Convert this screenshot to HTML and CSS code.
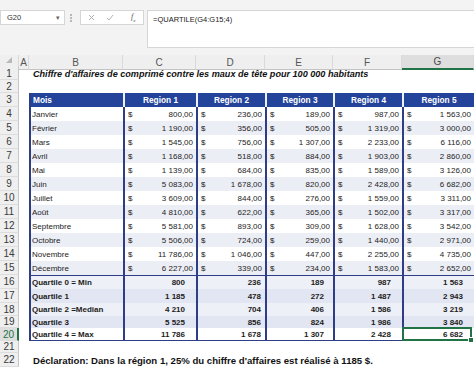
FILE: index.html
```html
<!DOCTYPE html>
<html lang="fr">
<head>
    <meta charset="UTF-8">
    <meta name="viewport" content="width=device-width, initial-scale=1.0">
    <title>Quartiles - Chiffre d'affaires</title>
    <link rel="stylesheet" href="styles.css">
</head>
<body>
<div class="formula-bar">
    <div class="name-box"><span>G20</span><span class="caret">▾</span></div>
    <div class="grip"></div>
    <div class="fx-box">
        <svg class="fx-icon" width="7" height="7" viewBox="0 0 7 7"><path d="M1 1L6 6M6 1L1 6" stroke="#a8a8a8" stroke-width="0.9" fill="none"/></svg>
        <svg class="fx-icon" width="8" height="7" viewBox="0 0 8 7"><path d="M1 4L3 6L7 1" stroke="#a8a8a8" stroke-width="0.9" fill="none"/></svg>
        <span class="fx-label">f<sub>x</sub></span>
    </div>
    <div class="formula">=QUARTILE(G4:G15;4)</div>
</div>

<div class="sheet" id="sheet">
    <div class="row col-head h12">
        <div class="corner"><svg width="19" height="12" viewBox="0 0 19 12"><polygon points="12,2 12,8 6,8" fill="#b9b9b9"/></svg></div>
        <div>A</div>
        <div>B</div>
        <div>C</div>
        <div>D</div>
        <div>E</div>
        <div>F</div>
        <div class="sel">G</div>
    </div>
</div>

<script>
    const cols = ['c', 'd', 'e', 'f', 'g'];

    const mois = [
        ['Janvier', '800,00', '236,00', '189,00', '987,00', '1 563,00'],
        ['Février', '1 190,00', '356,00', '505,00', '1 319,00', '3 000,00'],
        ['Mars', '1 545,00', '756,00', '1 307,00', '2 233,00', '6 116,00'],
        ['Avril', '1 168,00', '518,00', '884,00', '1 903,00', '2 860,00'],
        ['Mai', '1 139,00', '684,00', '835,00', '1 589,00', '3 126,00'],
        ['Juin', '5 083,00', '1 678,00', '820,00', '2 428,00', '6 682,00'],
        ['Juillet', '3 609,00', '844,00', '276,00', '1 559,00', '3 311,00'],
        ['Août', '4 810,00', '622,00', '365,00', '1 502,00', '3 317,00'],
        ['Septembre', '5 581,00', '893,00', '309,00', '1 628,00', '3 542,00'],
        ['Octobre', '5 506,00', '724,00', '259,00', '1 440,00', '2 971,00'],
        ['Novembre', '11 786,00', '1 046,00', '447,00', '2 255,00', '4 735,00'],
        ['Décembre', '6 227,00', '339,00', '234,00', '1 583,00', '2 652,00']
    ];

    const quartiles = [
        ['Quartile 0 = Min', '800', '236', '189', '987', '1 563'],
        ['Quartile 1', '1 185', '478', '272', '1 487', '2 943'],
        ['Quartile 2 =Median', '4 210', '704', '406', '1 586', '3 219'],
        ['Quartile 3', '5 525', '856', '824', '1 986', '3 840'],
        ['Quartile 4 = Max', '11 786', '1 678', '1 307', '2 428', '6 682']
    ];

    const sheet = document.getElementById('sheet');

    function addRow(num, cls, cells, rhCls = '') {
        const row = document.createElement('div');
        row.className = 'row ' + cls;
        row.innerHTML = `<div class="rh ${rhCls}">${num}</div><div class="cell"></div>` + cells;
        sheet.appendChild(row);
    }

    addRow(1, 'h13', '<div class="cell title">Chiffre d\'affaires de comprimé contre les maux de tête pour 100 000 habitants</div>');
    addRow(2, 'h13', '');
    addRow(3, 'head h14',
        '<div class="cell t b">Mois</div>' +
        [1, 2, 3, 4, 5].map(n => `<div class="cell t">Region ${n}</div>`).join(''));

    mois.forEach((m, i) => {
        let cells = `<div class="cell t b label">${m[0]}</div>`;
        for (let k = 1; k <= 5; k++) {
            cells += `<div class="cell t money ${cols[k - 1]}"><span>$</span><span>${m[k]}</span></div>`;
        }
        addRow(4 + i, 'data h14' + (i % 2 ? ' alt' : ''), cells);
    });

    const qHeights = ['h14', 'h14', 'h13', 'h12', 'h13'];
    quartiles.forEach((q, i) => {
        let cells = `<div class="cell t b label">${q[0]}</div>`;
        for (let k = 1; k <= 5; k++) {
            const sel = (i === 4 && k === 5) ? ' sel' : '';
            cells += `<div class="cell t num ${cols[k - 1]}${sel}">${q[k]}</div>`;
        }
        addRow(16 + i, `quart q${i} ${qHeights[i]}`, cells, i === 4 ? 'sel' : '');
    });

    addRow(21, 'h12', '');
    addRow(22, 'h14', '<div class="cell decl">Déclaration: Dans la région 1, 25% du chiffre d\'affaires est réalisé à 1185 $.</div>');
</script>
</body>
</html>
```

FILE: styles.css
```css
body {
    margin: 0;
    width: 474px;
    height: 367px;
    overflow: hidden;
    background-color: #ffffff;
    font-family: "Liberation Sans", Arial, sans-serif;
    color: #1c1c1c;
}

/* barre de formule */

.formula-bar {
    display: flex;
    align-items: flex-start;
    height: 55px;
    box-sizing: border-box;
    padding-top: 10px;
    background-color: #f3f3f3;
}

.name-box {
    display: flex;
    align-items: center;
    justify-content: space-between;
    width: 65px;
    height: 15px;
    box-sizing: border-box;
    padding: 0 4px 0 6px;
    background-color: #ffffff;
    border: 1px solid #d6d6d6;
    font-size: 7.5px;
    color: #333333;
}

.caret {
    font-size: 7px;
    color: #666666;
}

.grip {
    width: 0;
    height: 8px;
    margin: 4px 8px 0 5px;
    border-left: 2px dotted #b8b8b8;
}

.fx-box {
    display: flex;
    align-items: center;
    gap: 11px;
    width: 64px;
    height: 15px;
    box-sizing: border-box;
    padding-left: 7px;
    background-color: #ffffff;
    border: 1px solid #d6d6d6;
}

.fx-label {
    margin-left: 6px;
    font-family: "Liberation Serif", serif;
    font-style: italic;
    font-size: 8px;
    color: #555555;
}

.fx-label sub {
    font-size: 5px;
}

.formula {
    flex: 1;
    height: 38px;
    box-sizing: border-box;
    margin-left: 3px;
    padding: 4px 5px;
    background-color: #ffffff;
    border: 1px solid #d6d6d6;
    border-right: none;
    font-size: 7.5px;
    color: #222222;
}

/* feuille */

.row {
    display: grid;
    grid-template-columns: 19px 10px 94px 73px 69px 68px 69px 72px;
}

.h12 { height: 12px; }
.h13 { height: 13px; }
.h14 { height: 14px; }

.col-head > div {
    display: flex;
    align-items: center;
    justify-content: center;
    box-sizing: border-box;
    background-color: #efefef;
    border-right: 1px solid #d9d9d9;
    border-bottom: 1px solid #c4c4c4;
    font-size: 10px;
    color: #555555;
}

.col-head .corner {
    display: block;
}

.col-head .sel {
    background-color: #dedede;
    border-bottom: 2px solid #217346;
    color: #4a4a4a;
}

.rh {
    display: flex;
    align-items: center;
    justify-content: center;
    box-sizing: border-box;
    background-color: #efefef;
    border-right: 1px solid #c6c6c6;
    border-bottom: 1px solid #dddddd;
    font-size: 10px;
    color: #3a3a3a;
}

.rh.sel {
    background-color: #dedede;
    border-right: 2px solid #217346;
    color: #217346;
}

.cell {
    display: flex;
    align-items: center;
    min-width: 0;
    box-sizing: border-box;
    padding: 0 3px;
    font-size: 8px;
    white-space: nowrap;
    overflow: hidden;
}

.title {
    grid-column: 3 / -1;
    padding-left: 4px;
    font-size: 9.1px;
    font-weight: bold;
    font-style: italic;
    color: #111111;
}

.decl {
    grid-column: 3 / -1;
    padding-left: 4px;
    font-size: 9.6px;
    font-weight: bold;
    color: #111111;
}

/* tableau */

.t {
    border-left: 2px solid #2f3d86;
}

.head .t {
    justify-content: center;
    background-color: #24449c;
    border-left-color: #eef0f8;
    font-size: 8.3px;
    font-weight: bold;
    color: #ffffff;
}

.head .t.b {
    justify-content: flex-start;
    padding-left: 2px;
    border-left-color: #2f3d86;
}

.label {
    padding-left: 1px;
}

.money {
    justify-content: space-between;
    padding: 0 3px 0 3px;
}

.alt .t {
    background-color: #eceef6;
}

.quart .t {
    font-weight: bold;
}

.num {
    justify-content: flex-end;
    padding-right: 11px;
}

.num.d {
    padding-right: 4px;
}

.num.e {
    padding-right: 9px;
}

.q0 .t {
    border-top: 1px solid #2f3d86;
    background-color: #eef0f7;
}

.q1 .t, .q3 .t {
    background-color: #e2e5f2;
}

.q2 .t {
    background-color: #eef0f7;
}

.q4 .t {
    border-bottom: 1px solid #2f3d86;
}

.num.sel {
    position: relative;
    overflow: visible;
}

.num.sel::after {
    content: '';
    position: absolute;
    left: -2px;
    top: -1px;
    right: 2px;
    bottom: -1px;
    border: 2px solid #217346;
}

.num.sel::before {
    content: '';
    position: absolute;
    right: 0;
    bottom: -3px;
    width: 4px;
    height: 4px;
    background-color: #217346;
    border: 1px solid #ffffff;
    z-index: 1;
}
```
